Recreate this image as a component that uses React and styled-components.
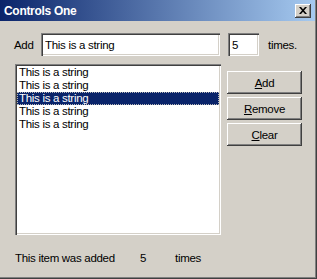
import React, { useState } from 'react'
import styled, { createGlobalStyle } from 'styled-components'

const GlobalStyle = createGlobalStyle`
  html, body {
    margin: 0;
    padding: 0;
    background: #d4d0c8;
  }
  * {
    box-sizing: border-box;
  }
`

const Window = styled.div`
  width: 317px;
  height: 279px;
  background: #d4d0c8;
  display: flex;
  flex-direction: column;
  box-shadow: inset -1px -1px 0 #404040, inset -2px -2px 0 #808080;
  font-family: "Liberation Sans", Arial, sans-serif;
  font-size: 11.5px;
  letter-spacing: -0.3px;
  color: #000;
  overflow: hidden;
`

const TitleBar = styled.div`
  height: 21px;
  display: flex;
  align-items: center;
  justify-content: space-between;
  padding: 0 4px 0 4px;
  background: linear-gradient(to right, #0a246a, #a6caf0);
  margin-right: 2px;
`

const Title = styled.span`
  color: #fff;
  font-weight: bold;
  font-size: 12px;
  letter-spacing: -0.3px;
`

const CloseButton = styled.div`
  width: 16px;
  height: 14px;
  background: #d4d0c8;
  box-shadow: inset -1px -1px 0 #404040, inset 1px 1px 0 #fff, inset -2px -2px 0 #808080;
  display: flex;
  align-items: center;
  justify-content: center;
`

const Body = styled.div`
  flex: 1;
  display: flex;
  flex-direction: column;
  padding: 12px 0 0 14px;
`

const TopRow = styled.div`
  display: flex;
  align-items: center;
  height: 23px;
`

const Label = styled.span`
  width: ${p => p.$w || 'auto'};
  margin-left: ${p => p.$ml || '0'};
`

const Field = styled.input`
  width: ${p => p.$w}px;
  height: 23px;
  margin-left: ${p => p.$ml || 0}px;
  border: none;
  outline: none;
  background: #fff;
  font: inherit;
  letter-spacing: inherit;
  padding: 1px 4px 0;
  box-shadow: inset 1px 1px 0 #808080, inset 2px 2px 0 #404040, inset -1px -1px 0 #fff, inset -2px -2px 0 #d4d0c8;
`

const MiddleRow = styled.div`
  display: flex;
  margin-top: 8px;
`

const ListBox = styled.div`
  width: 206px;
  height: 171px;
  margin-left: 1px;
  background: #fff;
  padding: 2px;
  box-shadow: inset 1px 1px 0 #808080, inset 2px 2px 0 #404040, inset -1px -1px 0 #fff, inset -2px -2px 0 #d4d0c8;
`

const Item = styled.div`
  height: 13px;
  line-height: 13px;
  padding-left: 2px;
  white-space: nowrap;
  background: ${p => (p.$selected ? '#0a246a' : 'transparent')};
  color: ${p => (p.$selected ? '#fff' : '#000')};
  outline: ${p => (p.$selected ? '1px dotted #b8b8b8' : 'none')};
  outline-offset: -1px;
  cursor: default;
`

const Buttons = styled.div`
  display: flex;
  flex-direction: column;
  gap: 3px;
  margin-left: 6px;
  margin-top: 7px;
`

const Button = styled.button`
  width: 75px;
  height: 23px;
  border: none;
  background: #d4d0c8;
  font: inherit;
  letter-spacing: inherit;
  color: #000;
  padding: 0;
  box-shadow: inset -1px -1px 0 #404040, inset 1px 1px 0 #fff, inset -2px -2px 0 #808080;
`

const StatusRow = styled.div`
  display: flex;
  align-items: center;
  margin-top: 17px;
  margin-left: 1px;
`

const items = ['This is a string', 'This is a string', 'This is a string', 'This is a string', 'This is a string']

const App = () => {
  const [text, setText] = useState('This is a string')
  const [count, setCount] = useState('5')
  const [selected, setSelected] = useState(2)

  return (
    <>
      <GlobalStyle />
      <Window>
        <TitleBar>
          <Title>Controls One</Title>
          <CloseButton>
            <svg width="8" height="7" viewBox="0 0 8 7">
              <path d="M0 0h2l2 2.2L6 0h2L5 3.5 8 7H6L4 4.8 2 7H0l3-3.5z" fill="#000" />
            </svg>
          </CloseButton>
        </TitleBar>
        <Body>
          <TopRow>
            <Label $w="27px">Add</Label>
            <Field $w={179} value={text} onChange={e => setText(e.target.value)} />
            <Field $w={31} $ml={8} value={count} onChange={e => setCount(e.target.value)} />
            <Label $ml="9px">times.</Label>
          </TopRow>
          <MiddleRow>
            <ListBox>
              {items.map((s, i) => (
                <Item key={i} $selected={i === selected} onClick={() => setSelected(i)}>{s}</Item>
              ))}
            </ListBox>
            <Buttons>
              <Button><u>A</u>dd</Button>
              <Button><u>R</u>emove</Button>
              <Button><u>C</u>lear</Button>
            </Buttons>
          </MiddleRow>
          <StatusRow>
            <Label $w="125px">This item was added</Label>
            <Label $w="35px">5</Label>
            <Label>times</Label>
          </StatusRow>
        </Body>
      </Window>
    </>
  )
}

export default App
